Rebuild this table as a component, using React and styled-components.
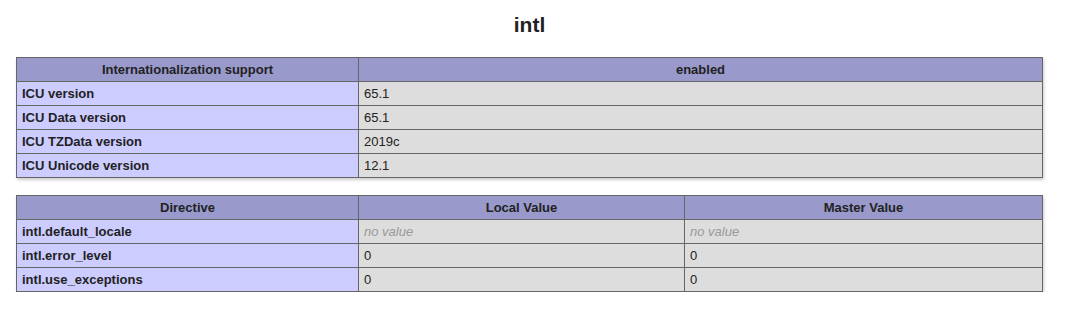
import React from 'react'
import styled, { createGlobalStyle } from 'styled-components'

const Global = createGlobalStyle`
  body {
    margin: 0;
    background: #fff;
    color: #222;
    font-family: "Liberation Sans", Arial, sans-serif;
  }
`

const Page = styled.div`
  width: 1027px;
  padding: 13px 0 0 16px;
  display: flex;
  flex-direction: column;
  gap: 17px;
`

const Title = styled.h2`
  margin: 0 0 3px;
  font-size: 21px;
  line-height: 24px;
  font-weight: bold;
  text-align: center;
`

const Table = styled.table`
  width: 1027px;
  border-collapse: collapse;
  table-layout: fixed;
  box-shadow: 1px 2px 3px #ccc;
`

const Cell = styled.td`
  border: 1px solid #666;
  padding: 4px 5px;
  font-size: 13px;
  line-height: 15px;
  vertical-align: baseline;
  text-align: left;
  background: ${p => (p.$key ? '#ccf' : '#ddd')};
  font-weight: ${p => (p.$key ? 'bold' : 'normal')};
`

const Head = styled.th`
  border: 1px solid #666;
  padding: 4px 5px;
  font-size: 13px;
  line-height: 15px;
  background: #99c;
  font-weight: bold;
  text-align: center;
`

const Empty = styled.i`
  color: #999;
`

const support = [
  ['ICU version', '65.1'],
  ['ICU Data version', '65.1'],
  ['ICU TZData version', '2019c'],
  ['ICU Unicode version', '12.1'],
]

const directives = [
  ['intl.default_locale', null, null],
  ['intl.error_level', '0', '0'],
  ['intl.use_exceptions', '0', '0'],
]

const show = v => (v === null ? <Empty>no value</Empty> : v)

export default function App() {
  return (
    <>
      <Global />
      <Page>
        <Title>intl</Title>
        <Table>
          <colgroup>
            <col style={{ width: 342 }} />
            <col />
          </colgroup>
          <thead>
            <tr>
              <Head>Internationalization support</Head>
              <Head>enabled</Head>
            </tr>
          </thead>
          <tbody>
            {support.map(([k, v]) => (
              <tr key={k}>
                <Cell $key>{k}</Cell>
                <Cell>{v}</Cell>
              </tr>
            ))}
          </tbody>
        </Table>
        <Table>
          <colgroup>
            <col style={{ width: 342 }} />
            <col style={{ width: 326 }} />
            <col />
          </colgroup>
          <thead>
            <tr>
              <Head>Directive</Head>
              <Head>Local Value</Head>
              <Head>Master Value</Head>
            </tr>
          </thead>
          <tbody>
            {directives.map(([k, local, master]) => (
              <tr key={k}>
                <Cell $key>{k}</Cell>
                <Cell>{show(local)}</Cell>
                <Cell>{show(master)}</Cell>
              </tr>
            ))}
          </tbody>
        </Table>
      </Page>
    </>
  )
}
